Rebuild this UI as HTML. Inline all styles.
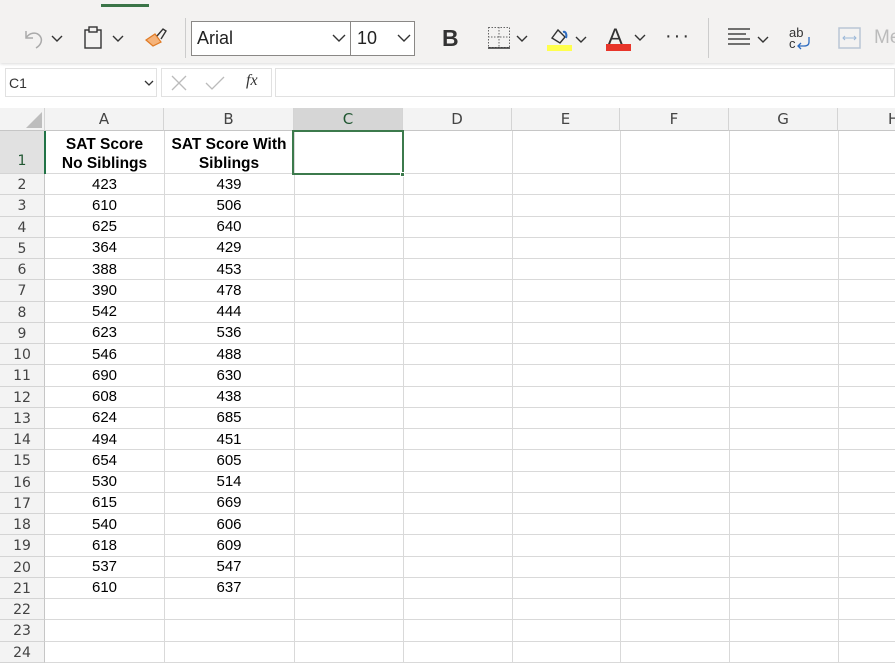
<!DOCTYPE html>
<html><head><style>
*{margin:0;padding:0;box-sizing:border-box}
body{width:895px;height:662px;overflow:hidden;background:#fff;font-family:"Liberation Sans",Arial,sans-serif;position:relative}
.a{position:absolute}
.tb{left:0;top:0;width:895px;height:63px;background:#f3f2f1;box-shadow:0 1px 3px rgba(0,0,0,.15)}
.hd{position:absolute;top:108px;height:23px;background:#f3f3f3;border-right:1px solid #d4d4d4;border-bottom:1px solid #c6c6c6;color:#444;font-size:15px;text-align:center;line-height:23px;font-family:"DejaVu Sans",sans-serif}
.rh{position:absolute;left:0;width:45px;background:#f3f3f3;border-bottom:1px solid #d4d4d4;border-right:1px solid #c6c6c6;color:#444;font-size:14px;text-align:center;font-family:"DejaVu Sans",sans-serif}
.vl{position:absolute;top:131px;width:1px;height:531px;background:#d9d9d9}
.hl{position:absolute;left:45px;width:850px;height:1px;background:#d9d9d9}
.c{position:absolute;font-size:15px;text-align:center;color:#000}
</style></head><body>
<div class="a tb"></div>
<div class="a" style="left:101px;top:4px;width:48px;height:3px;background:#3a7447"></div>
<svg class="a" style="left:20px;top:25px" width="50" height="28"><path d="M6 6v7h7M6 13c3-5 10-7 14-2 3 4 1 9-4 12" fill="none" stroke="#aaa" stroke-width="1.5"/><path d="M32 11l5 5 5-5" fill="none" stroke="#333" stroke-width="1.4"/></svg>
<svg class="a" style="left:82px;top:25px" width="46" height="28"><rect x="3" y="5" width="16" height="18" fill="none" stroke="#333" stroke-width="1.4"/><rect x="7" y="2" width="8" height="5" fill="#f3f2f1" stroke="#333" stroke-width="1.4"/><path d="M31 11l5 5 5-5" fill="none" stroke="#333" stroke-width="1.4"/></svg>
<svg class="a" style="left:143px;top:26px" width="26" height="24"><path d="M3 14l9-6 6 8-8 4z" fill="#f5b37a" stroke="#e07b25" stroke-width="1.2"/><path d="M14 10l6-7 3 2-5 8" fill="none" stroke="#333" stroke-width="1.4"/></svg>
<div class="a" style="left:185px;top:18px;width:1px;height:40px;background:#ccc"></div>
<div class="a" style="left:191px;top:21px;width:224px;height:35px;border:1px solid #8a8886;background:#fff"></div>
<div class="a" style="left:350px;top:21px;width:1px;height:35px;background:#8a8886"></div>
<div class="a" style="left:197px;top:28px;font-size:18px;color:#222">Arial</div>
<div class="a" style="left:357px;top:28px;font-size:18px;color:#222">10</div>
<svg class="a" style="left:332px;top:33px" width="14" height="10"><path d="M1 2l6 6 6-6" fill="none" stroke="#333" stroke-width="1.4"/></svg>
<svg class="a" style="left:397px;top:33px" width="14" height="10"><path d="M1 2l6 6 6-6" fill="none" stroke="#333" stroke-width="1.4"/></svg>
<div class="a" style="left:442px;top:25px;font-size:23px;font-weight:bold;color:#333">B</div>
<svg class="a" style="left:487px;top:26px" width="46" height="24"><rect x="1.5" y="1.5" width="21" height="20" fill="none" stroke="#666" stroke-dasharray="1.5 1.5"/><path d="M12 1v21M1 11h22" stroke="#666" stroke-dasharray="1.5 1.5"/><path d="M1 22h22" stroke="#333" stroke-width="1.5"/><path d="M30 10l5 5 5-5" fill="none" stroke="#333" stroke-width="1.4"/></svg>
<svg class="a" style="left:546px;top:26px" width="48" height="26"><path d="M6 12l6-8 7 7-5 6z" fill="none" stroke="#333" stroke-width="1.4"/><path d="M17 6c3-1 4 3 3 6" fill="none" stroke="#2e6cc0" stroke-width="2"/><rect x="1" y="19" width="25" height="6" fill="#ffff4d"/><path d="M30 11l5 5 5-5" fill="none" stroke="#333" stroke-width="1.4"/></svg>
<div class="a" style="left:608px;top:24px;font-size:22px;color:#333">A</div>
<div class="a" style="left:606px;top:44px;width:25px;height:7px;background:#e8352a"></div>
<svg class="a" style="left:634px;top:33px" width="14" height="10"><path d="M1 2l5 5 5-5" fill="none" stroke="#333" stroke-width="1.4"/></svg>
<div class="a" style="left:665px;top:25px;font-size:20px;color:#333;letter-spacing:2px">···</div>
<div class="a" style="left:708px;top:18px;width:1px;height:40px;background:#ccc"></div>
<svg class="a" style="left:727px;top:27px" width="46" height="22"><path d="M1 2h22M1 7h18M1 12h22M1 17h22" stroke="#444" stroke-width="1.4"/><path d="M31 10l5 5 5-5" fill="none" stroke="#333" stroke-width="1.4"/></svg>
<div class="a" style="left:789px;top:27px;font-size:13px;line-height:11px;color:#333">ab<br>c</div>
<svg class="a" style="left:796px;top:36px" width="16" height="14"><path d="M13 1v5c0 3-2 4-5 4H2M5 7l-3 3 3 3" fill="none" stroke="#2e6cc0" stroke-width="1.3"/></svg>
<svg class="a" style="left:838px;top:27px" width="24" height="22"><rect x="1" y="1" width="21" height="20" fill="none" stroke="#b9c6d5" stroke-width="1.5"/><path d="M5 11h13M7 9l-2 2 2 2M16 9l2 2-2 2" stroke="#9bb8d8" fill="none"/></svg>
<div class="a" style="left:874px;top:27px;font-size:19px;color:#bbb">Me</div>
<div class="a" style="left:5px;top:68px;width:152px;height:29px;border:1px solid #e1e1e1;background:#fff"></div>
<div class="a" style="left:9px;top:75px;font-size:14px;color:#333">C1</div>
<svg class="a" style="left:144px;top:79px" width="10" height="8"><path d="M1 2l4 4 4-4" fill="none" stroke="#333" stroke-width="1.3"/></svg>
<div class="a" style="left:161px;top:68px;width:111px;height:29px;border:1px solid #e1e1e1;background:#fff"></div>
<svg class="a" style="left:170px;top:74px" width="60" height="18"><path d="M2 2l14 14M16 2L2 16" stroke="#bbb" stroke-width="1.3"/><path d="M36 9l6 6 12-12" fill="none" stroke="#bbb" stroke-width="1.3"/></svg>
<div class="a" style="left:246px;top:72px;font-size:16px;font-style:italic;font-family:'Liberation Serif',serif;color:#333">fx</div>
<div class="a" style="left:275px;top:68px;width:620px;height:29px;border:1px solid #e1e1e1;background:#fff"></div>
<div class="hd" style="left:0;width:45px"></div>
<svg class="a" style="left:24px;top:110px" width="20" height="20"><path d="M18 2v16H2z" fill="#bdbdbd"/></svg>
<div class="hd" style="left:45px;width:119px">A</div>
<div class="hd" style="left:164px;width:130px">B</div>
<div class="hd" style="left:294px;width:109px;background:#d6d6d6;color:#215732">C</div>
<div class="hd" style="left:403px;width:109px">D</div>
<div class="hd" style="left:512px;width:108px">E</div>
<div class="hd" style="left:620px;width:109px">F</div>
<div class="hd" style="left:729px;width:109px">G</div>
<div class="hd" style="left:838px;width:60px;text-align:left;padding-left:50px">H</div>
<div class="vl" style="left:164px"></div><div class="vl" style="left:294px"></div><div class="vl" style="left:403px"></div><div class="vl" style="left:512px"></div><div class="vl" style="left:620px"></div><div class="vl" style="left:729px"></div><div class="vl" style="left:838px"></div>
<div class="rh" style="top:131px;height:43px;line-height:60px;color:#215732;background:#e1e1e1">1</div>
<div class="hl" style="top:173px"></div>
<div class="c" style="left:45px;top:135px;width:119px;line-height:19px;font-size:15.5px;font-weight:bold">SAT Score<br>No Siblings</div>
<div class="c" style="left:164px;top:135px;width:130px;line-height:19px;font-size:15.5px;font-weight:bold">SAT Score With<br>Siblings</div>
<div class="a" style="left:44px;top:131px;width:2px;height:43px;background:#217346"></div>
<div class="a" style="left:292px;top:130px;width:112px;height:45px;border:2px solid #3c7a4c"></div>
<div class="a" style="left:400px;top:172px;width:5px;height:5px;background:#3c7a4c;border:1px solid #fff"></div>
<div id="rows"></div>
<script>
var A=[423,610,625,364,388,390,542,623,546,690,608,624,494,654,530,615,540,618,537,610],B=[439,506,640,429,453,478,444,536,488,630,438,685,451,605,514,669,606,609,547,637],h='';
for(var i=2;i<=24;i++){var t=174+(i-2)*21.25;
h+='<div class="rh" style="top:'+t+'px;height:21.25px;line-height:22px">'+i+'</div><div class="hl" style="top:'+(t+20.25)+'px"></div>';
if(i<=21){h+='<div class="c" style="left:45px;top:'+(t+1.5)+'px;width:119px">'+A[i-2]+'</div><div class="c" style="left:164px;top:'+(t+1.5)+'px;width:130px">'+B[i-2]+'</div>';}}
document.getElementById('rows').innerHTML=h;
</script>
</body></html>
